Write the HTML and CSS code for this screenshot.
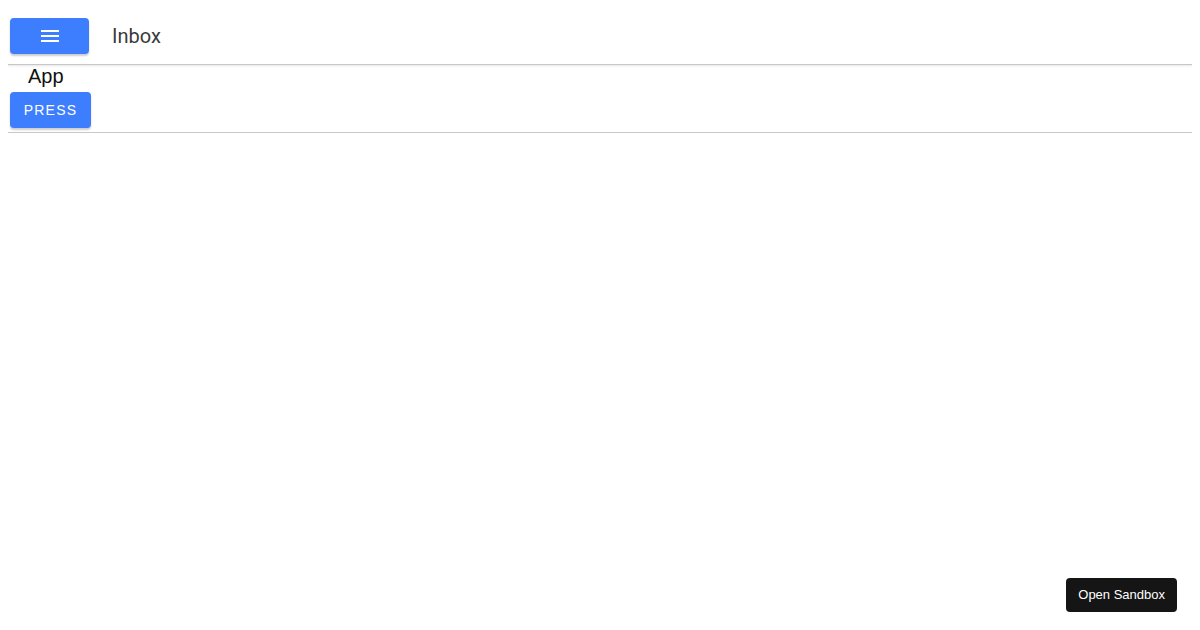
FILE: index.html
```html
<!doctype html>
<html lang="en">
<head>
    <meta charset="UTF-8">
    <title>Inbox</title>
    <link rel="stylesheet" href="styles.css">
</head>
<body>

    <div class="header">
        <button class="btn btn-menu" type="button">
            <svg width="18" height="12" viewBox="0 0 18 12">
                <rect x="0" y="0" width="18" height="2" fill="#fff"/>
                <rect x="0" y="5" width="18" height="2" fill="#fff"/>
                <rect x="0" y="10" width="18" height="2" fill="#fff"/>
            </svg>
        </button>
        <span class="title">Inbox</span>
    </div>

    <div class="content">
        <div class="app-name">App</div>
        <button class="btn btn-press" type="button">Press</button>
    </div>

    <a class="sandbox" href="javascript:void(0)">Open Sandbox</a>

</body>
</html>
```

FILE: styles.css
```css
body{
    margin: 8px;
    font-family: Roboto, "Liberation Sans", sans-serif;
    background-color: #fff;
}
.btn{
    border: none;
    border-radius: 4px;
    background-color: #3d7efe;
    color: #fff;
    cursor: pointer;
    box-shadow: 0 2px 2px rgba(0,0,0,.2);
}
.header{
    height: 56px;
    display: flex;
    align-items: center;
    padding: 0 2px;
    border-bottom: 1px solid #c8c8c8;
    box-shadow: 0 1px 2px rgba(0,0,0,.1);
}
.btn-menu{
    width: 79px;
    height: 36px;
    display: flex;
    align-items: center;
    justify-content: center;
}
.title{
    margin-left: 23px;
    font-size: 20px;
    color: #3a3a3a;
}
.content{
    height: 67px;
    padding: 0 2px;
    border-bottom: 1px solid #c8c8c8;
    box-shadow: 0 1px 2px rgba(0,0,0,.1);
}
.app-name{
    padding: 0 0 0 18px;
    height: 27px;
    line-height: 22px;
    font-family: "Liberation Sans", Arial, sans-serif;
    font-size: 20px;
    color: #111;
}
.btn-press{
    width: 81px;
    height: 36px;
    font-family: "Liberation Sans", Arial, sans-serif;
    font-size: 14px;
    letter-spacing: 1.2px;
    text-transform: uppercase;
}
.sandbox{
    position: fixed;
    right: 23px;
    bottom: 18px;
    padding: 0 12px;
    height: 34px;
    line-height: 34px;
    border-radius: 4px;
    background-color: #151515;
    color: #fff;
    font-size: 13px;
    font-family: "Liberation Sans", Arial, sans-serif;
    text-decoration: none;
}
```
